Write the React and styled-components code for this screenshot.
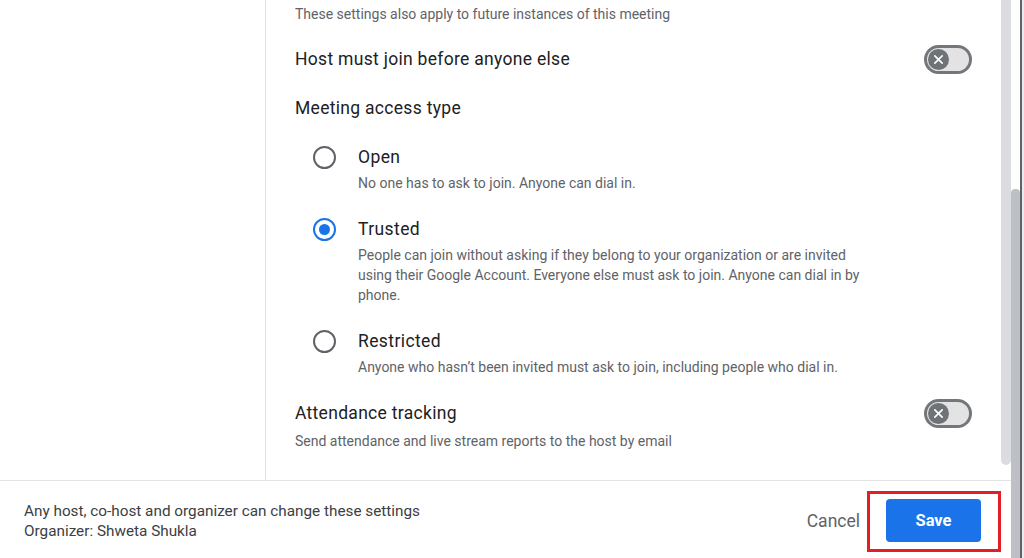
import React from 'react';
import styled, { createGlobalStyle } from 'styled-components';

const GlobalStyle = createGlobalStyle`
    html, body {
        margin: 0;
        padding: 0;
        background: #ffffff;
    }
    body {
        font-family: Roboto, "Liberation Sans", Arial, sans-serif;
        color: #202124;
    }
`;

const Page = styled.div`
    display: flex;
    width: 1024px;
    height: 558px;
    overflow: hidden;
`;

const Main = styled.div`
    display: flex;
    flex-direction: column;
    width: 1011px;
`;

const Body = styled.div`
    display: flex;
    height: 480px;
    border-bottom: 1px solid #e3e3e3;
`;

const LeftPanel = styled.div`
    width: 265px;
    border-right: 1px solid #e3e3e3;
`;

const Content = styled.div`
    flex: 1;
    padding: 4px 29px 0 29px;
`;

const InnerScroll = styled.div`
    width: 10px;
    display: flex;
    flex-direction: column;
`;

const InnerThumb = styled.div`
    height: 465px;
    background: #dadce0;
    border-radius: 0 0 5px 5px;
`;

const PageScroll = styled.div`
    display: flex;
    width: 13px;
`;

const PageTrack = styled.div`
    width: 9px;
    padding-top: 189px;
    display: flex;
    flex-direction: column;
`;

const PageThumb = styled.div`
    flex: 1;
    background: #bdc1c6;
    border-radius: 4px 4px 0 0;
`;

const PageEdge = styled.div`
    width: 2px;
    background: #5f6368;
`;

const PageRim = styled.div`
    width: 2px;
    background: #e8eaed;
`;

const Note = styled.div`
    font-size: 14px;
    line-height: 20px;
    color: #5f6368;
    margin-top: ${p => p.$top || 0}px;
`;

const SettingRow = styled.div`
    display: flex;
    align-items: center;
    justify-content: space-between;
    height: 30px;
    margin-top: ${p => p.$top || 0}px;
`;

const Heading = styled.div`
    font-size: 17.5px;
    line-height: 24px;
    color: #202124;
    letter-spacing: 0.3px;
    margin-top: ${p => p.$top || 0}px;
`;

const Switch = styled.div`
    box-sizing: border-box;
    width: 48px;
    height: 29px;
    border: 3px solid #73777c;
    border-radius: 15px;
    background: #e3e3e3;
    display: flex;
    align-items: center;
    padding-left: 1px;
`;

const Knob = styled.div`
    width: 21px;
    height: 21px;
    border-radius: 50%;
    background: #6f7378;
    display: flex;
    align-items: center;
    justify-content: center;
`;

const Options = styled.div`
    padding-left: 18px;
    display: flex;
    flex-direction: column;
    gap: 24px;
    margin-top: 25px;
`;

const Option = styled.div`
    display: grid;
    grid-template-columns: 45px 1fr;
`;

const RadioCell = styled.div`
    height: 24px;
    display: flex;
    align-items: center;
`;

const Radio = styled.div`
    box-sizing: border-box;
    width: 23px;
    height: 23px;
    border-radius: 50%;
    border: 2px solid ${p => (p.$checked ? '#1a73e8' : '#5f6368')};
    display: flex;
    align-items: center;
    justify-content: center;
    &::after {
        content: '';
        display: ${p => (p.$checked ? 'block' : 'none')};
        width: 11px;
        height: 11px;
        border-radius: 50%;
        background: #1a73e8;
    }
`;

const OptionLabel = styled.div`
    font-size: 17.5px;
    line-height: 24px;
    letter-spacing: 0.4px;
    color: #202124;
`;

const OptionText = styled.div`
    font-size: 14px;
    line-height: 20px;
    color: #5f6368;
    margin-top: 4px;
    max-width: 508px;
`;

const Footer = styled.div`
    flex: 1;
    display: flex;
    align-items: center;
    justify-content: space-between;
    padding: 3px 10px 0 24px;
`;

const FooterText = styled.div`
    font-size: 15.3px;
    line-height: 20px;
    color: #3c4043;
`;

const Actions = styled.div`
    display: flex;
    align-items: center;
    gap: 7px;
`;

const TextButton = styled.button`
    border: none;
    background: none;
    font-family: Roboto, "Liberation Sans", Arial, sans-serif;
    font-size: 17.5px;
    color: #5f6368;
    padding: 8px 0;
    cursor: pointer;
`;

const Highlight = styled.div`
    border: 3px solid #e31e24;
    padding: 5px 17px 7px 16px;
`;

const PrimaryButton = styled.button`
    width: 95px;
    height: 43px;
    border: none;
    border-radius: 4px;
    background: #1a73e8;
    color: #ffffff;
    font-family: Roboto, "Liberation Sans", Arial, sans-serif;
    font-size: 16.5px;
    font-weight: 700;
    cursor: pointer;
`;

const Toggle = () => (
    <Switch>
        <Knob>
            <svg width="11" height="11" viewBox="0 0 12 12">
                <path d="M2 2 L10 10 M10 2 L2 10" stroke="#ffffff" strokeWidth="1.8" strokeLinecap="round" />
            </svg>
        </Knob>
    </Switch>
);

const options = [
    { label: 'Open', text: 'No one has to ask to join. Anyone can dial in.' },
    {
        label: 'Trusted',
        checked: true,
        text: 'People can join without asking if they belong to your organization or are invited using their Google Account. Everyone else must ask to join. Anyone can dial in by phone.',
    },
    { label: 'Restricted', text: 'Anyone who hasn\u2019t been invited must ask to join, including people who dial in.' },
];

const App = () => {
    return (
        <Page>
            <GlobalStyle />
            <Main>
                <Body>
                    <LeftPanel />
                    <Content>
                        <Note>These settings also apply to future instances of this meeting</Note>
                        <SettingRow $top={20}>
                            <Heading>Host must join before anyone else</Heading>
                            <Toggle />
                        </SettingRow>
                        <Heading $top={22}>Meeting access type</Heading>
                        <Options>
                            {options.map(o => (
                                <Option key={o.label}>
                                    <RadioCell>
                                        <Radio $checked={o.checked} />
                                    </RadioCell>
                                    <div>
                                        <OptionLabel>{o.label}</OptionLabel>
                                        <OptionText>{o.text}</OptionText>
                                    </div>
                                </Option>
                            ))}
                        </Options>
                        <SettingRow $top={21}>
                            <Heading>Attendance tracking</Heading>
                            <Toggle />
                        </SettingRow>
                        <Note $top={3}>Send attendance and live stream reports to the host by email</Note>
                    </Content>
                    <InnerScroll>
                        <InnerThumb />
                    </InnerScroll>
                </Body>
                <Footer>
                    <FooterText>
                        Any host, co-host and organizer can change these settings
                        <br />
                        Organizer: Shweta Shukla
                    </FooterText>
                    <Actions>
                        <TextButton>Cancel</TextButton>
                        <Highlight>
                            <PrimaryButton>Save</PrimaryButton>
                        </Highlight>
                    </Actions>
                </Footer>
            </Main>
            <PageScroll>
                <PageTrack>
                    <PageThumb />
                </PageTrack>
                <PageEdge />
                <PageRim />
            </PageScroll>
        </Page>
    );
};

export default App;
